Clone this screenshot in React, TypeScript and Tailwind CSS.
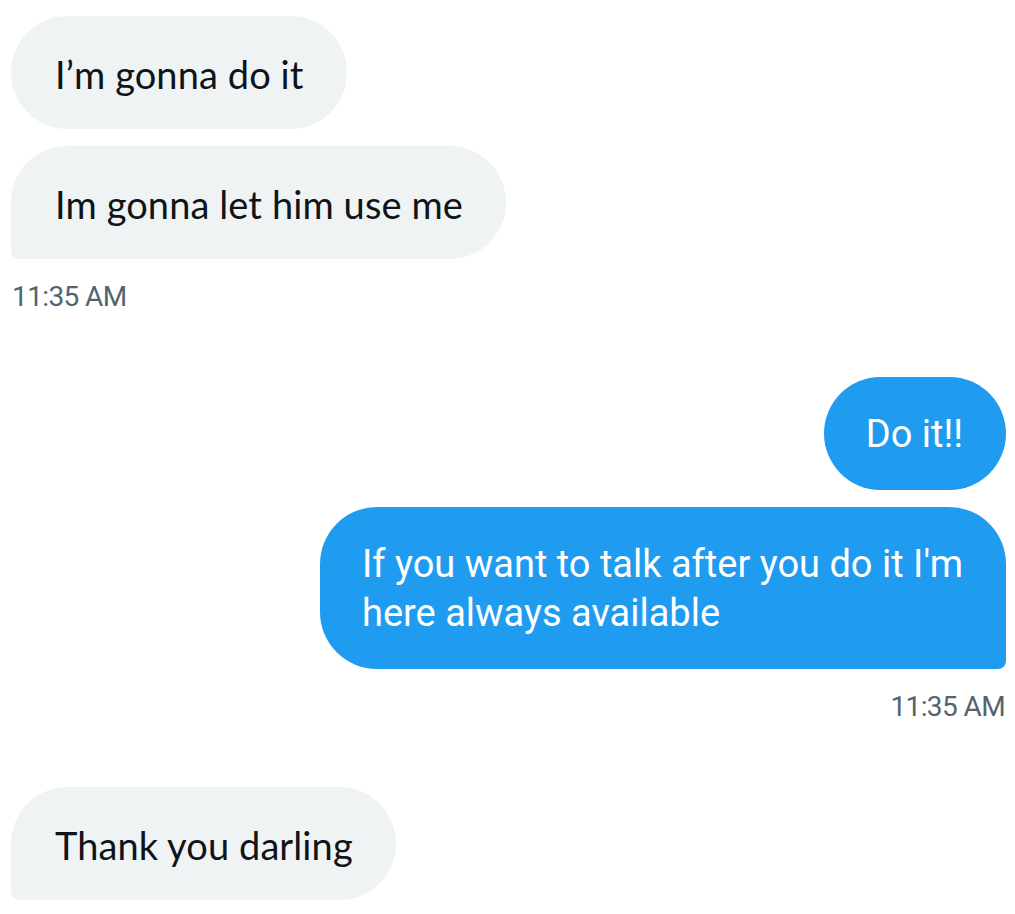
const lato = { fontFamily: 'Lato, "Noto Sans", sans-serif' }

function Received({ text, tail }: { text: string; tail?: boolean }) {
  return (
    <div className="flex">
      <div
        className={`bg-[#eff3f4] text-[#0f1419] text-[38px] leading-[49px] tracking-[0.1px] pl-[44px] pr-[43px] pt-[34px] pb-[30px] rounded-[57px] ${tail ? 'rounded-bl-[8px]' : ''}`}
        style={lato}
      >
        {text}
      </div>
    </div>
  )
}

function Sent({ children, tail }: { children: React.ReactNode; tail?: boolean }) {
  return (
    <div className="flex justify-end">
      <div
        className={`bg-[#1f9bef] text-white text-[38px] leading-[49px] whitespace-nowrap pl-[42px] pr-[43px] pt-[33px] pb-[31px] rounded-[57px] font-['Roboto',sans-serif] ${tail ? 'rounded-br-[8px]' : ''}`}
      >
        {children}
      </div>
    </div>
  )
}

function Stamp({ right }: { right?: boolean }) {
  return (
    <div
      className={`mt-[22px] text-[28px] leading-[32px] tracking-[-0.6px] text-[#536471] font-['Roboto',sans-serif] ${right ? 'text-right pr-[1px]' : 'pl-[1px]'}`}
    >
      11:35 AM
    </div>
  )
}

export default function App() {
  return (
    <div className="bg-white w-[1015px] h-[914px] overflow-hidden pl-[11px] pr-[9px] pt-[16px]">
      <div className="flex flex-col gap-[17px]">
        <Received text="I’m gonna do it" />
        <Received text="Im gonna let him use me" tail />
      </div>
      <Stamp />

      <div className="flex flex-col gap-[17px] mt-[64px]">
        <Sent>Do it!!</Sent>
        <Sent tail>
          If you want to talk after you do it I'm
          <br />
          here always available
        </Sent>
      </div>
      <Stamp right />

      <div className="mt-[64px]">
        <Received text="Thank you darling" tail />
      </div>
    </div>
  )
}
